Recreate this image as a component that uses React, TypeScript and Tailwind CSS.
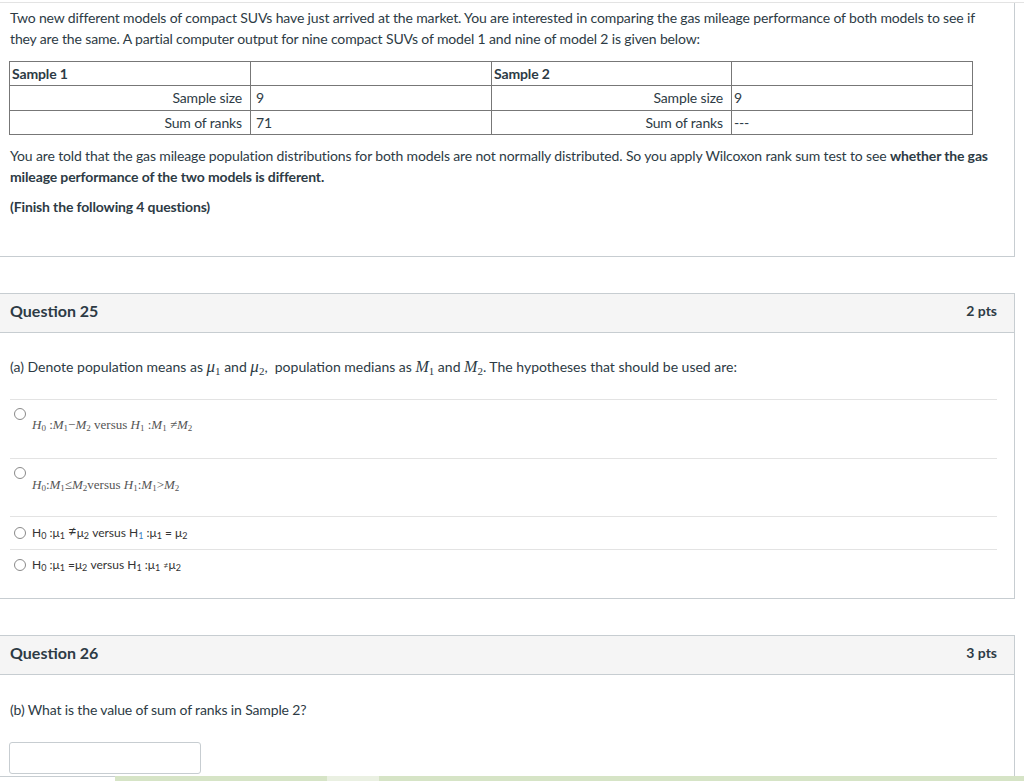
import React from 'react'

function Radio({ className = '' }: { className?: string }) {
  return <span className={'block w-[12px] h-[12px] rounded-full border border-[#8a8a8a] bg-white shrink-0 ' + className} />
}

function Mu({ n }: { n: string }) {
  return (
    <span className="font-['Liberation_Serif',serif] text-[17px]">
      <i>μ</i>
      <sub className="text-[11px] not-italic">{n}</sub>
    </span>
  )
}

function M({ n }: { n: string }) {
  return (
    <span className="font-['Liberation_Serif',serif] text-[16px]">
      <i>M</i>
      <sub className="text-[11px] not-italic">{n}</sub>
    </span>
  )
}

function QuestionHeader({ title, pts }: { title: string; pts: string }) {
  return (
    <div className="h-[39px] bg-[#f5f5f5] border-b border-[#c7cdd1] flex items-start justify-between pt-[5px] pl-[10px] pr-[17px] leading-[24px]">
      <h2 className="text-[16px] font-bold">{title}</h2>
      <span className="text-[14px] font-bold">{pts}</span>
    </div>
  )
}

export default function App() {
  return (
    <div className="min-h-screen bg-white font-['Lato',sans-serif] text-[#2d3b45] overflow-hidden">
      <div className="h-[2px]" />
      <div className="h-px bg-[#e3e3e3]" />

      <div className="w-[1016px] -ml-px">
        {/* intro */}
        <div className="border-x border-b border-[#c7cdd1] pl-[10px] pr-[17px] pt-[4px] pb-[39px] text-[14px] leading-[21px] tracking-[-0.14px]">
          <p>
            Two new different models of compact SUVs have just arrived at the market. You are interested in comparing the gas
            mileage performance of both models to see if they are the same. A partial computer output for nine compact SUVs
            of model 1 and nine of model 2 is given below:
          </p>

          <table className="mt-[12px] -ml-px w-[964px] border-collapse text-[14px] leading-[16px]">
            <tbody>
              <tr className="h-[24px]">
                <td className="w-[241px] border border-[#777] pl-[2px] font-bold">Sample 1</td>
                <td className="w-[241px] border border-[#777]"></td>
                <td className="w-[240px] border border-[#777] pl-[2px] font-bold">Sample 2</td>
                <td className="w-[241px] border border-[#777]"></td>
              </tr>
              <tr className="h-[25px]">
                <td className="border border-[#777] text-right pr-[8px]">Sample size</td>
                <td className="border border-[#777] pl-[5px]">9</td>
                <td className="border border-[#777] text-right pr-[8px]">Sample size</td>
                <td className="border border-[#777] pl-[2px]">9</td>
              </tr>
              <tr className="h-[24px]">
                <td className="border border-[#777] text-right pr-[8px]">Sum of ranks</td>
                <td className="border border-[#777] pl-[5px]">71</td>
                <td className="border border-[#777] text-right pr-[8px]">Sum of ranks</td>
                <td className="border border-[#777] pl-[2px]">---</td>
              </tr>
            </tbody>
          </table>

          <p className="mt-[10px]">
            You are told that the gas mileage population distributions for both models are not normally distributed. So you
            apply Wilcoxon rank sum test to see <b>whether the gas mileage performance of the two models is different.</b>
          </p>
          <p className="mt-[9px] font-bold">(Finish the following 4 questions)</p>
        </div>

        {/* question 25 */}
        <div className="mt-[36px] border border-[#c7cdd1]">
          <QuestionHeader title="Question 25" pts="2 pts" />
          <div className="pl-[10px] pr-[17px] pt-[23px] pb-[18px]">
            <p className="text-[14px] leading-[21px]">
              (a) Denote population means as <Mu n="1" /> and <Mu n="2" />,&nbsp; population medians as <M n="1" /> and{' '}
              <M n="2" />. The hypotheses that should be used are:
            </p>

            <div className="mt-[22px]">
              <div className="h-[59px] border-t border-[#e3e3e3] flex items-start pl-[4px]">
                <Radio className="mt-[8px]" />
                <span className="ml-[6px] mt-[17px] leading-[16px] font-['Liberation_Serif',serif] text-[13px] text-[#555]">
                  <i>H</i>
                  <sub className="text-[9px]">0</sub> :<i>M</i>
                  <sub className="text-[9px]">1</sub>−<i>M</i>
                  <sub className="text-[9px]">2</sub> versus <i>H</i>
                  <sub className="text-[9px]">1</sub> :<i>M</i>
                  <sub className="text-[9px]">1</sub> ≠<i>M</i>
                  <sub className="text-[9px]">2</sub>
                </span>
              </div>

              <div className="h-[58px] border-t border-[#e3e3e3] flex items-start pl-[4px]">
                <Radio className="mt-[8px]" />
                <span className="ml-[6px] mt-[18px] leading-[16px] font-['Liberation_Serif',serif] text-[13px] text-[#555]">
                  <i>H</i>
                  <sub className="text-[9px]">0</sub>:<i>M</i>
                  <sub className="text-[9px]">1</sub>≤<i>M</i>
                  <sub className="text-[9px]">2</sub>versus <i>H</i>
                  <sub className="text-[9px]">1</sub>:<i>M</i>
                  <sub className="text-[9px]">1</sub>&gt;<i>M</i>
                  <sub className="text-[9px]">2</sub>
                </span>
              </div>

              <div className="h-[33px] border-t border-[#e3e3e3] flex items-center pl-[4px] text-[12px] text-[#333]">
                <Radio />
                <span className="ml-[6px]">
                  H<sub className="text-[9px]">0</sub> :μ<sub className="text-[9px]">1</sub>{' '}
                  <span className="text-[15px] leading-none">≠</span>μ<sub className="text-[9px]">2</sub> versus H
                  <sub className="text-[9px] text-[#3b82c4]">1</sub> :μ<sub className="text-[9px]">1</sub> = μ
                  <sub className="text-[9px]">2</sub>
                </span>
              </div>

              <div className="h-[31px] border-t border-[#e3e3e3] flex items-center pl-[4px] text-[12px] text-[#333]">
                <Radio />
                <span className="ml-[6px]">
                  H<sub className="text-[9px]">0</sub> :μ<sub className="text-[9px]">1</sub> =μ
                  <sub className="text-[9px]">2</sub> versus H<sub className="text-[9px]">1</sub> :μ
                  <sub className="text-[9px]">1</sub> <span className="text-[9px]">≠</span>μ
                  <sub className="text-[9px]">2</sub>
                </span>
              </div>
            </div>
          </div>
        </div>

        {/* question 26 */}
        <div className="mt-[36px] border border-[#c7cdd1]">
          <QuestionHeader title="Question 26" pts="3 pts" />
          <div className="pl-[10px] pr-[17px] pt-[24px] pb-[40px]">
            <p className="text-[14px] leading-[21px] tracking-[-0.14px]">(b) What is the value of sum of ranks in Sample 2?</p>
            <input
              type="text"
              className="mt-[22px] -ml-px block h-[32px] w-[192px] border border-[#c7cdd1] rounded-[3px] bg-white outline-none"
            />
          </div>
        </div>
      </div>

      {/* bottom bar peeking in */}
      <div className="fixed bottom-0 left-0 right-0 h-[5px] flex">
        <div className="w-[115px] bg-white border-t border-[#c7cdd1]" />
        <div className="w-[212px] bg-[#d6e4c6]" />
        <div className="w-[52px] bg-[#eaf0e2]" />
        <div className="flex-1 bg-[#d6e4c6]" />
      </div>
    </div>
  )
}
